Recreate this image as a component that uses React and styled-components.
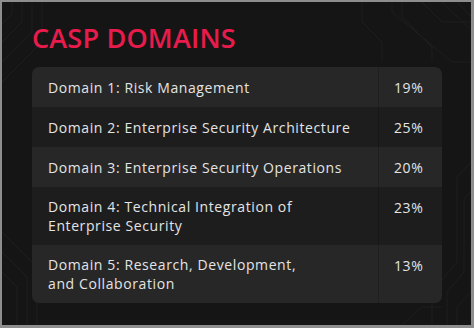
import React from "react";
import styled, { createGlobalStyle } from "styled-components";

const Global = createGlobalStyle`
  html, body { margin: 0; padding: 0; background: #151515; }
  #root { width: 474px; height: 328px; }
`;

const Frame = styled.div`
  position: relative;
  box-sizing: border-box;
  width: 474px;
  height: 328px;
  border-style: solid;
  border-color: #8e8e8e;
  border-width: 2px 3px 3px 2px;
  background: #151515;
  overflow: hidden;
  font-family: "Open Sans", "Noto Sans", sans-serif;
`;

const Traces = styled.svg`
  position: absolute;
  inset: 0;
  width: 100%;
  height: 100%;
  pointer-events: none;
`;

const Content = styled.div`
  position: relative;
  display: flex;
  flex-direction: column;
  padding: 19px 0 0 30px;
`;

const Title = styled.h1`
  margin: 0 0 12px 0;
  font-size: 27px;
  line-height: 34px;
  font-weight: 600;
  letter-spacing: 0.2px;
  color: #e81c4c;
`;

const Table = styled.div`
  width: 410px;
  border-radius: 7px;
  overflow: hidden;
  display: flex;
  flex-direction: column;
`;

const Row = styled.div`
  display: grid;
  grid-template-columns: 1fr 64px;
  min-height: 40px;
  background: ${(p) => (p.$alt ? "#1d1d1d" : "#272727")};
`;

const Cell = styled.div`
  padding: 10px 16px;
  align-self: stretch;
  display: flex;
  flex-direction: column;
  justify-content: center;
  font-size: 14px;
  line-height: 19px;
  letter-spacing: 0.6px;
  color: #e4e4e4;
  & + & {
    justify-content: flex-start;
    padding-top: 10.5px;
    border-left: 1px solid rgba(0, 0, 0, 0.18);
    padding-left: 15px;
  }
`;

const rows = [
  [["Domain 1: Risk Management"], "19%"],
  [["Domain 2: Enterprise Security Architecture"], "25%"],
  [["Domain 3: Enterprise Security Operations"], "20%"],
  [["Domain 4: Technical Integration of", "Enterprise Security"], "23%"],
  [["Domain 5: Research, Development,", "and Collaboration"], "13%"],
];

export default function App() {
  return (
    <>
      <Global />
      <Frame>
        <Traces viewBox="0 0 469 323" fill="none" stroke="#1e1e1e" strokeWidth="1">
          <path d="M0 40 L20 20 L20 0 M0 60 L30 30 L30 0 M0 80 L40 40 L40 0 M10 0 L10 12 L0 22" />
          <path d="M0 250 L25 275 L25 323 M0 270 L15 285 L15 323 M0 230 L35 265 L35 323" />
          <path d="M360 0 L360 20 L380 40 L380 60 M400 0 L400 15 L430 45 L430 60 M420 0 L440 20 L469 20 M440 0 L469 28 M455 0 L469 14 M390 0 L390 10 L450 60 L469 60" />
          <path d="M469 160 L455 175 L455 260 L430 290 L430 323 M469 190 L462 197 L462 270 L445 290 L445 323 M469 240 L469 290 L455 305 L455 323 M400 323 L420 305 L440 305" />
        </Traces>
        <Content>
          <Title>CASP DOMAINS</Title>
          <Table>
            {rows.map(([lines, pct], i) => (
              <Row key={i} $alt={i % 2 === 1}>
                <Cell>
                  <span>
                    {lines.map((l, j) => (
                      <React.Fragment key={j}>
                        {j > 0 && <br />}
                        {l}
                      </React.Fragment>
                    ))}
                  </span>
                </Cell>
                <Cell>{pct}</Cell>
              </Row>
            ))}
          </Table>
        </Content>
      </Frame>
    </>
  );
}
